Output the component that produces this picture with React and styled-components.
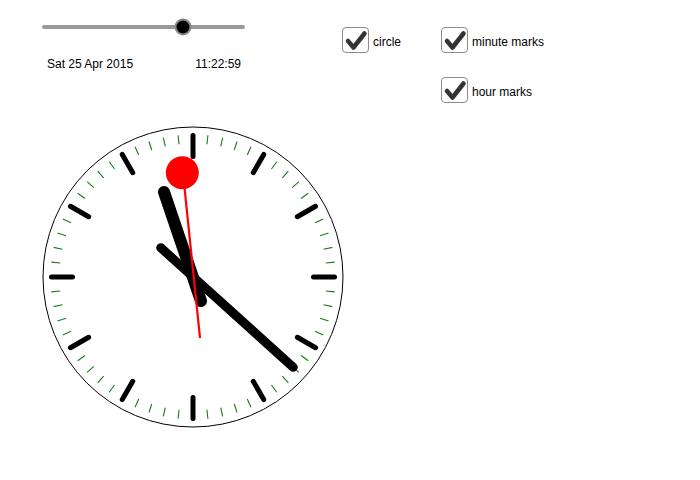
import React from 'react';
import styled, { createGlobalStyle } from 'styled-components';

const GlobalStyle = createGlobalStyle`
  html, body {
    margin: 0;
    padding: 0;
    background: #ffffff;
    font-family: "Liberation Sans", Arial, sans-serif;
  }
`;

const Page = styled.div`
  display: flex;
  width: 700px;
  height: 480px;
  background: #fff;
`;

const LeftPanel = styled.div`
  width: 342px;
  display: flex;
  flex-direction: column;
`;

const SliderWrap = styled.div`
  position: relative;
  width: 203px;
  height: 18px;
  margin: 18px 0 0 42px;
  display: flex;
  align-items: center;
`;

const Track = styled.div`
  width: 100%;
  height: 4px;
  border-radius: 2px;
  background: #999;
`;

const Thumb = styled.div`
  position: absolute;
  top: 50%;
  width: 13px;
  height: 13px;
  border-radius: 50%;
  background: #000;
  border: 2.5px solid #8a8a8a;
  transform: translate(-50%, -50%);
`;

const DateRow = styled.div`
  display: flex;
  justify-content: space-between;
  width: 194px;
  margin: 21px 0 0 47px;
  font-size: 12px;
  line-height: 14px;
  color: #000;
`;

const ClockSvg = styled.svg`
  display: block;
  margin: 51px 0 0 38px;
`;

const Options = styled.div`
  display: grid;
  grid-template-columns: 99px 120px;
  grid-auto-rows: 26px;
  row-gap: 24px;
  padding-top: 27px;
`;

const Option = styled.label`
  display: flex;
  align-items: center;
  gap: 4px;
  font-size: 12px;
  color: #000;
  white-space: nowrap;
  grid-column: ${(p) => p.col};
  grid-row: ${(p) => p.row};
`;

const LabelText = styled.span`
  padding-top: 3px;
`;

const Box = styled.span`
  box-sizing: border-box;
  flex: none;
  width: 27px;
  height: 26px;
  border: 1px solid #8c8c8c;
  border-radius: 4px;
  background: #fff;
  display: flex;
`;

const Check = () => (
  <Box>
    <svg width="25" height="24" viewBox="0 0 25 24">
      <path d="M5 13 L10.5 19.5 L21.5 5.5" fill="none" stroke="#333" strokeWidth="4.5" strokeLinecap="round" strokeLinejoin="round" />
    </svg>
  </Box>
);

const C = 155;

const polar = (deg, r) => {
  const a = (deg - 90) * Math.PI / 180;
  return [C + r * Math.cos(a), C + r * Math.sin(a)];
};

const Clock = () => {
  const marks = [];
  for (let i = 0; i < 60; i++) {
    const deg = i * 6;
    if (i % 5 === 0) {
      const [x1, y1] = polar(deg, 120.5);
      const [x2, y2] = polar(deg, 141.5);
      marks.push(<line key={i} x1={x1} y1={y1} x2={x2} y2={y2} stroke="#000" strokeWidth="5" strokeLinecap="round" />);
    } else {
      const [x1, y1] = polar(deg, 133.5);
      const [x2, y2] = polar(deg, 142.5);
      marks.push(<line key={i} x1={x1} y1={y1} x2={x2} y2={y2} stroke="#1a7a1a" strokeWidth="1.1" />);
    }
  }
  return (
    <ClockSvg width="310" height="310" viewBox="0 0 310 310">
      <circle cx={C} cy={C} r="150" fill="#fff" stroke="#000" strokeWidth="1" />
      {marks}
      <line x1="126" y1="70" x2="163" y2="179" stroke="#000" strokeWidth="12" strokeLinecap="round" />
      <line x1="122.7" y1="125.7" x2="255.3" y2="245.3" stroke="#000" strokeWidth="9" strokeLinecap="round" />
      <line x1="145" y1="51" x2="162" y2="216" stroke="#f00" strokeWidth="2.2" />
      <circle cx="144.3" cy="50.7" r="16.5" fill="#f00" />
    </ClockSvg>
  );
};

export default function App() {
  return (
    <Page>
      <GlobalStyle />
      <LeftPanel>
        <SliderWrap>
          <Track />
          <Thumb style={{ left: '69.5%' }} />
        </SliderWrap>
        <DateRow>
          <span>Sat 25 Apr 2015</span>
          <span>11:22:59</span>
        </DateRow>
        <Clock />
      </LeftPanel>
      <Options>
        <Option col={1} row={1}><Check /><LabelText>circle</LabelText></Option>
        <Option col={2} row={1}><Check /><LabelText>minute marks</LabelText></Option>
        <Option col={2} row={2}><Check /><LabelText>hour marks</LabelText></Option>
      </Options>
    </Page>
  );
}
